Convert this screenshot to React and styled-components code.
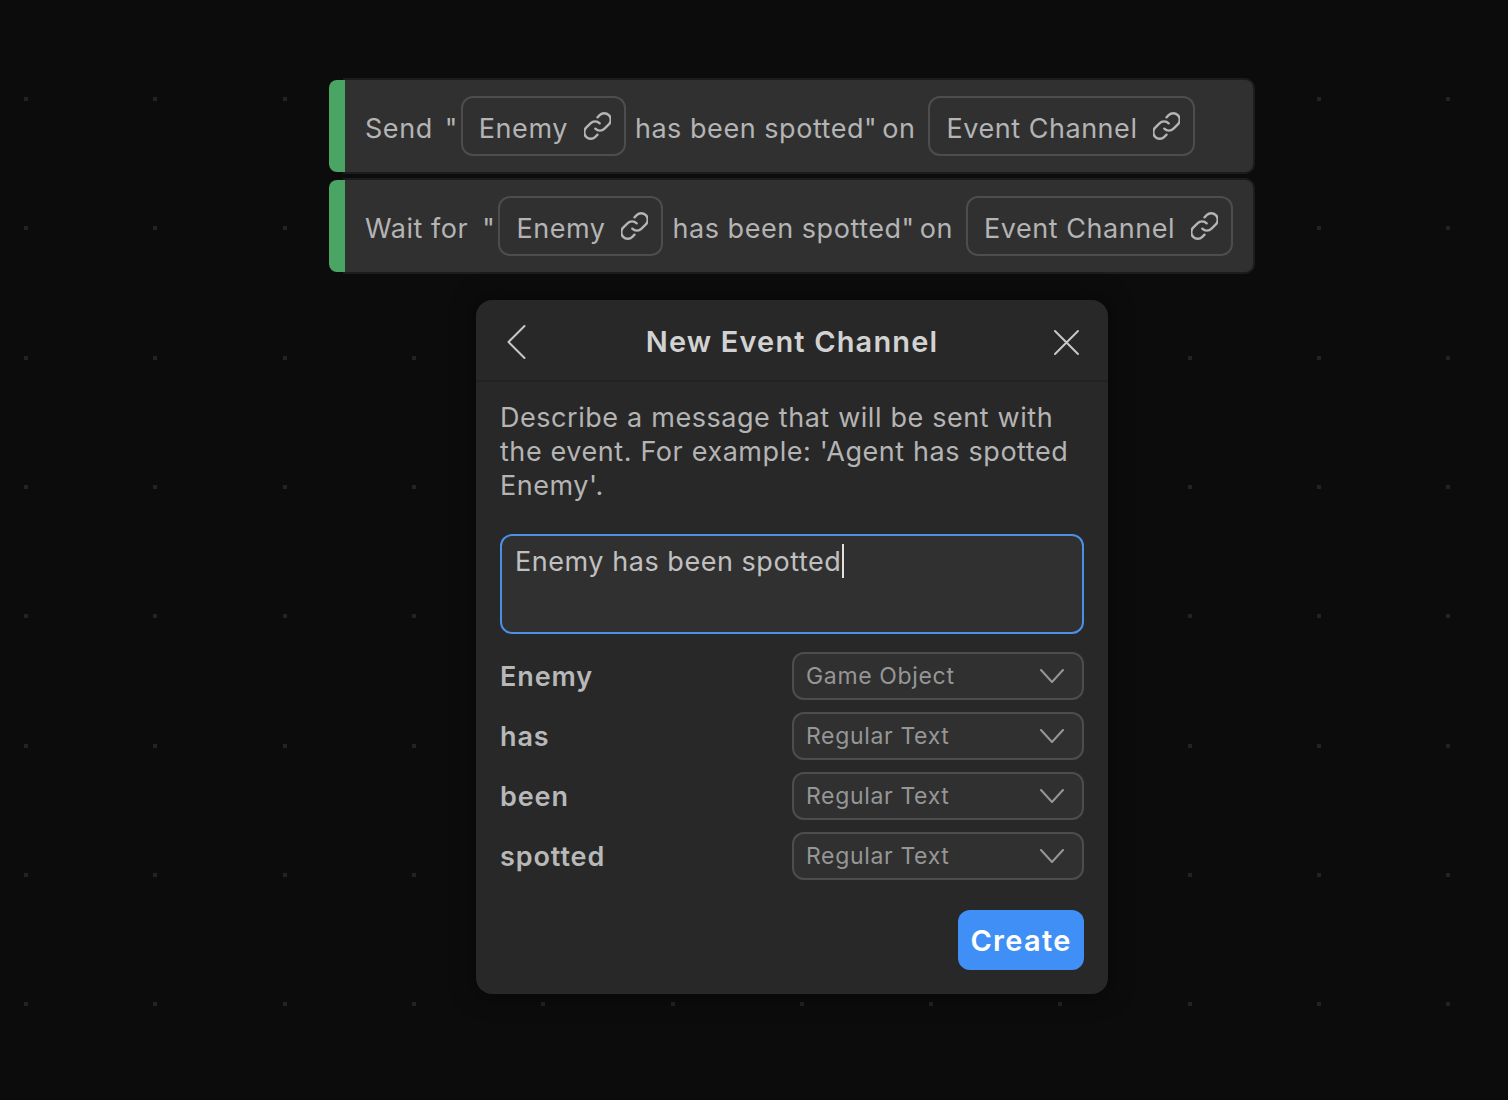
import React from "react";
import styled, { createGlobalStyle } from "styled-components";

const Global = createGlobalStyle`
  html, body { margin: 0; padding: 0; background: #0c0c0c; }
  * { box-sizing: border-box; }
`;

const Canvas = styled.div`
  position: relative;
  width: 1508px;
  height: 1100px;
  overflow: hidden;
  padding: 80px 0 0 76px;
  display: flex;
  flex-direction: column;
  align-items: center;
  background-color: #0c0c0c;
  font-family: Inter, "Liberation Sans", sans-serif;
`;

const DotLayer = styled.svg`
  position: absolute;
  left: 0;
  top: 0;
`;

const Dots = () => {
  const cols = Array.from({ length: 12 }, (_, i) => 24 + i * 129.3);
  const rows = Array.from({ length: 8 }, (_, i) => 97 + i * 129.3);
  return (
    <DotLayer width="1508" height="1100" viewBox="0 0 1508 1100">
      {rows.map((y) =>
        cols.map((x) => (
          <rect key={`${x}-${y}`} x={Math.round(x)} y={Math.round(y)} width="4" height="4" fill="#232323" />
        ))
      )}
    </DotLayer>
  );
};

const Rows = styled.div`
  position: relative;
  width: 926px;
  display: flex;
  flex-direction: column;
  gap: 8px;
`;

const Block = styled.div`
  height: 92px;
  display: flex;
  padding-right: 2px;
`;

const Stripe = styled.div`
  position: relative;
  z-index: 1;
  width: 16px;
  flex: none;
  background: #4aa564;
  border-radius: 8px 0 0 8px;
`;

const BlockBody = styled.div`
  flex: 1;
  display: flex;
  align-items: center;
  padding-left: 20px;
  background: #303030;
  border-radius: 0 8px 8px 0;
  box-shadow: 0 0 0 2px #1c1c1c;
  font-size: 27px;
  letter-spacing: 0.54px;
  color: #b4b4b4;
  white-space: nowrap;
`;

const Word = styled.span`
  padding-top: 4px;
  margin-right: ${(p) => p.$mr ?? 0}px;
`;

const Pill = styled.div`
  height: 60px;
  display: flex;
  align-items: center;
  gap: 16px;
  padding: 0 13px 0 16px;
  border: 2px solid #4d4d4d;
  border-radius: 12px;
  margin-right: ${(p) => p.$mr ?? 0}px;
`;

const Modal = styled.div`
  position: relative;
  width: 632px;
  height: 694px;
  margin-top: 28px;
  background: #282828;
  border-radius: 16px;
  box-shadow: 0 0 24px rgba(0, 0, 0, 0.5);
  display: flex;
  flex-direction: column;
`;

const Header = styled.div`
  height: 82px;
  flex: none;
  display: flex;
  align-items: center;
  padding: 4px 28px 0;
  border-bottom: 2px solid #222222;
`;

const Title = styled.div`
  flex: 1;
  padding-bottom: 2px;
  text-align: center;
  font-size: 29px;
  font-weight: 600;
  letter-spacing: 1.15px;
  color: #d2d2d2;
`;

const Body = styled.div`
  padding: 19px 24px 24px;
  display: flex;
  flex-direction: column;
  flex: 1;
`;

const Description = styled.p`
  margin: 0;
  font-size: 27px;
  line-height: 34px;
  letter-spacing: 0.54px;
  word-spacing: 0.3px;
  color: #b4b4b4;
`;

const Input = styled.div`
  height: 100px;
  margin-top: 31px;
  padding: 9px 13px;
  background: #303030;
  border: 2px solid #4a90e8;
  border-radius: 12px;
  font-size: 27px;
  line-height: 34px;
  letter-spacing: 0.54px;
  color: #c0c0c0;
`;

const Caret = styled.span`
  display: inline-block;
  width: 2px;
  height: 34px;
  margin: -1px 0 0 1px;
  background: #e0e0e0;
  vertical-align: top;
`;

const Fields = styled.div`
  margin-top: 18px;
  display: flex;
  flex-direction: column;
  gap: 12px;
`;

const Field = styled.div`
  display: flex;
  align-items: center;
  justify-content: space-between;
  height: 48px;
`;

const Label = styled.div`
  padding-top: 1px;
  font-size: 27px;
  font-weight: 600;
  letter-spacing: 0.9px;
  color: #b8b8b8;
`;

const Select = styled.div`
  width: 292px;
  height: 48px;
  display: flex;
  align-items: center;
  justify-content: space-between;
  padding: 0 18px 0 12px;
  background: #303030;
  border: 2px solid #4d4d4d;
  border-radius: 12px;
  font-size: 23px;
  letter-spacing: 0.65px;
  color: #969696;
`;

const Actions = styled.div`
  display: flex;
  justify-content: flex-end;
  margin-top: 30px;
`;

const Create = styled.button`
  width: 126px;
  height: 60px;
  padding: 0;
  border: 0;
  border-radius: 12px;
  background: #3f8ff7;
  color: #ffffff;
  font-family: inherit;
  font-size: 29px;
  font-weight: 600;
  letter-spacing: 1.3px;
`;

const IconSvg = styled.svg`
  display: block;
  flex: none;
  fill: none;
  stroke: ${(p) => p.$c};
  stroke-width: ${(p) => p.$w};
  stroke-linecap: round;
  stroke-linejoin: round;
`;

const LinkIcon = () => (
  <IconSvg $c="#b4b4b4" $w="2.2" width="27" height="28" viewBox="1.5 1.5 25 25">
    <path d="M12 16.5a6 6 0 0 0 8.5 0l4-4a6 6 0 0 0-8.5-8.5l-2 2" />
    <path d="M16 11.5a6 6 0 0 0-8.5 0l-4 4a6 6 0 0 0 8.5 8.5l2-2" />
  </IconSvg>
);

const Chevron = () => (
  <IconSvg $c="#969696" $w="2" width="24" height="14" viewBox="0 0 24 14">
    <path d="M1 1l11 12L23 1" />
  </IconSvg>
);

const Back = () => (
  <IconSvg $c="#c8c8c8" $w="2" width="28" height="34" viewBox="0 0 28 34">
    <path d="M20.5 1L4.5 17l16 16" />
  </IconSvg>
);

const Close = () => (
  <IconSvg $c="#c8c8c8" $w="2" width="28" height="28" viewBox="0 0 28 28">
    <path d="M3 3l23 23M26 3L3 26" />
  </IconSvg>
);

const Pin = ({ children, mr }) => (
  <Pill $mr={mr}>
    <Word>{children}</Word>
    <LinkIcon />
  </Pill>
);

const Row = ({ verb, verbGap }) => (
  <Block>
    <Stripe />
    <BlockBody>
      <Word $mr={verbGap}>{verb}</Word>
      <Word $mr={3}>"</Word>
      <Pin mr={9}>Enemy</Pin>
      <Word $mr={5}>has been spotted"</Word>
      <Word $mr={13}>on</Word>
      <Pin>Event Channel</Pin>
    </BlockBody>
  </Block>
);

const FIELDS = [
  ["Enemy", "Game Object"],
  ["has", "Regular Text"],
  ["been", "Regular Text"],
  ["spotted", "Regular Text"],
];

export default function App() {
  return (
    <>
      <Global />
      <Canvas>
        <Dots />
        <Rows>
          <Row verb="Send" verbGap={12} />
          <Row verb="Wait for" verbGap={14} />
        </Rows>
        <Modal>
          <Header>
            <Back />
            <Title>New Event Channel</Title>
            <Close />
          </Header>
          <Body>
            <Description>
              Describe a message that will be sent with the event. For example: 'Agent has spotted Enemy'.
            </Description>
            <Input>
              Enemy has been spotted
              <Caret />
            </Input>
            <Fields>
              {FIELDS.map(([name, type]) => (
                <Field key={name}>
                  <Label>{name}</Label>
                  <Select>
                    {type}
                    <Chevron />
                  </Select>
                </Field>
              ))}
            </Fields>
            <Actions>
              <Create>Create</Create>
            </Actions>
          </Body>
        </Modal>
      </Canvas>
    </>
  );
}
